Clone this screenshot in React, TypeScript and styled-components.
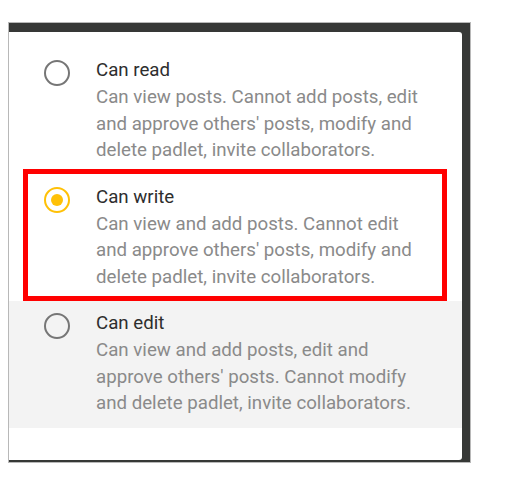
import React from "react";
import styled, { createGlobalStyle } from "styled-components";

const GlobalStyle = createGlobalStyle`
  html, body {
    margin: 0;
    padding: 0;
    background: #fff;
  }
  body {
    font-family: Roboto, "Noto Sans", Arial, sans-serif;
  }
`;

const Page = styled.div`
  padding: 22px 0 0 8px;
`;

const Backdrop = styled.div`
  width: 463px;
  box-sizing: border-box;
  border: 1px solid #b8b8b8;
  background: #363836;
  padding: 9px 8px 2px 0;
`;

const Card = styled.div`
  background: #fff;
  border-radius: 0 3px 3px 0;
  padding: 16px 0 32px;
`;

const Option = styled.div<{ $hovered?: boolean }>`
  position: relative;
  display: flex;
  align-items: flex-start;
  gap: 26px;
  padding: 12px 36px 11px 35px;
  background: ${(p) => (p.$hovered ? "#f3f3f3" : "transparent")};
  cursor: pointer;
`;

const Highlight = styled.div`
  position: absolute;
  top: -6px;
  left: 14px;
  right: 15px;
  bottom: 0;
  border: 5px solid #ff0000;
  pointer-events: none;
`;

const Radio = styled.div<{ $checked?: boolean }>`
  flex: none;
  width: 26px;
  height: 26px;
  box-sizing: border-box;
  border-radius: 50%;
  border: ${(p) => (p.$checked ? "2.5px solid #ffc107" : "2px solid #767676")};
  display: flex;
  align-items: center;
  justify-content: center;

  &::after {
    content: "";
    display: ${(p) => (p.$checked ? "block" : "none")};
    width: 12px;
    height: 12px;
    border-radius: 50%;
    background: #ffc107;
  }
`;

const Texts = styled.div`
  flex: 1;
  min-width: 0;
`;

const Title = styled.div`
  font-size: 18.7px;
  line-height: 20px;
  color: #2e2e2e;
`;

const Description = styled.div`
  margin-top: 4px;
  font-size: 18.7px;
  line-height: 26.5px;
  color: #8a8a8a;
`;

const options = [
  {
    title: "Can read",
    text: "Can view posts. Cannot add posts, edit and approve others' posts, modify and delete padlet, invite collaborators.",
  },
  {
    title: "Can write",
    text: "Can view and add posts. Cannot edit and approve others' posts, modify and delete padlet, invite collaborators.",
    checked: true,
  },
  {
    title: "Can edit",
    text: "Can view and add posts, edit and approve others' posts. Cannot modify and delete padlet, invite collaborators.",
    hovered: true,
  },
];

export default function App() {
  return (
    <Page>
      <GlobalStyle />
      <Backdrop>
        <Card>
          {options.map((o) => (
            <Option key={o.title} $hovered={o.hovered}>
              <Radio $checked={o.checked} />
              <Texts>
                <Title>{o.title}</Title>
                <Description>{o.text}</Description>
              </Texts>
              {o.checked && <Highlight />}
            </Option>
          ))}
        </Card>
      </Backdrop>
    </Page>
  );
}
